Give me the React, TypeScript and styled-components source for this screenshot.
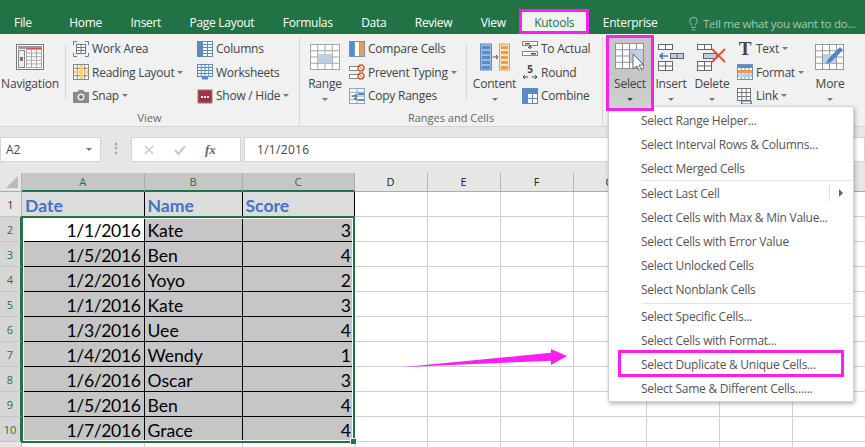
import React from 'react';
import styled, { createGlobalStyle } from 'styled-components';
import { Lightbulb } from 'lucide-react';

const Global = createGlobalStyle`
  html, body { margin: 0; padding: 0; background: #fff; }
  *, *::before, *::after { box-sizing: border-box; }
`;

const uiFont = `'Open Sans', 'Noto Sans', sans-serif`;

const Page = styled.div`
  position: relative;
  width: 865px;
  height: 447px;
  overflow: hidden;
  font-family: ${uiFont};
  background: #fff;
`;

/* title bar tabs */
const TabBar = styled.div`
  height: 34px;
  background: #217346;
  display: flex;
  align-items: flex-end;
  padding-left: 14px;
  gap: 28.5px;
`;

const Tab = styled.div<{ $active?: boolean; $wide?: boolean }>`
  position: relative;
  height: 24px;
  line-height: 26px;
  font-size: 12px;
  letter-spacing: -0.3px;
  color: ${({ $active }) => ($active ? '#217346' : '#fff')};
  margin-right: ${({ $wide }) => ($wide ? '9px' : '0')};
  white-space: nowrap;

  ${({ $active }) =>
    $active &&
    `
    &::before {
      content: '';
      position: absolute;
      inset: -1px -15px 0 -15px;
      background: #f1f1f1;
      border: 3px solid #f81ff0;
      z-index: 0;
    }
    & > span { position: relative; z-index: 1; }
  `}
`;

const TellMe = styled.div`
  display: flex;
  align-items: center;
  gap: 2px;
  height: 24px;
  padding-top: 2px;
  font-size: 11.6px;
  letter-spacing: -0.3px;
  color: #a3c9b3;
  white-space: nowrap;
`;

/* ribbon */
const Ribbon = styled.div`
  height: 93px;
  background: #f1f1f1;
  border-bottom: 1px solid #d4d4d4;
  display: flex;
`;

const Group = styled.div<{ $w: number; $edge?: boolean }>`
  width: ${({ $w }) => $w}px;
  flex: none;
  display: flex;
  flex-direction: column;
  height: 88px;
  margin-top: 3px;
  border-right: ${({ $edge }) => ($edge ? '1px solid #d6d6d6' : 'none')};
`;

const GroupBody = styled.div`
  flex: 1;
  display: flex;
  min-height: 0;
`;

const GroupLabel = styled.div`
  height: 15px;
  line-height: 16px;
  font-size: 11px;
  color: #666;
  text-align: center;
  white-space: nowrap;
`;

const LargeButton = styled.div<{ $w: number; $picked?: boolean }>`
  position: relative;
  z-index: 3;
  width: ${({ $w }) => $w}px;
  flex: none;
  height: 72px;
  display: flex;
  flex-direction: column;
  align-items: center;
  padding-top: 6px;
  font-size: 12px;
  letter-spacing: -0.2px;
  color: #444;
  ${({ $picked }) =>
    $picked &&
    `
    outline: 3px solid #f81ff0;
    outline-offset: -1px;
    background: linear-gradient(#c6c6c6 0 60%, #d2d2d2 100%);
  `}
`;

const LargeIcon = styled.div`
  height: 28px;
  display: flex;
  align-items: center;
  justify-content: center;
`;

const LargeText = styled.div`
  margin-top: 4px;
  line-height: 18px;
  white-space: nowrap;
`;

const Caret = styled.span<{ $dark?: boolean }>`
  display: inline-block;
  width: 0;
  height: 0;
  border-left: 3px solid transparent;
  border-right: 3px solid transparent;
  border-top: 3px solid ${({ $dark }) => ($dark ? '#444' : '#777')};
`;

const CaretRow = styled.div`
  height: 13px;
  display: flex;
  align-items: center;
  justify-content: center;
`;

const Divider = styled.div<{ $at: number }>`
  width: 1px;
  flex: none;
  height: 55px;
  margin: 7px ${({ $at }) => $at}px 0 0;
  background: #d6d6d6;
`;

const SmallColumn = styled.div<{ $w: number }>`
  width: ${({ $w }) => $w}px;
  flex: none;
`;

const SmallItem = styled.div`
  height: 23.5px;
  display: flex;
  align-items: center;
  gap: 3px;
  font-size: 12px;
  letter-spacing: -0.25px;
  color: #444;
  white-space: nowrap;
`;

const SmallIcon = styled.div`
  width: 16px;
  height: 16px;
  flex: none;
  display: flex;
  align-items: center;
  justify-content: center;
`;

const Spacer = styled.div<{ $w: number }>`
  width: ${({ $w }) => $w}px;
  flex: none;
`;

const SerifT = styled.span`
  font-family: 'Liberation Serif', serif;
  font-weight: 700;
  font-size: 19px;
  line-height: 16px;
  color: #444;
`;

const RoundMark = styled.span`
  font-size: 10px;
  font-weight: 700;
  line-height: 9px;
  color: #444;
  display: flex;
  flex-direction: column;
  align-items: center;
`;

/* name box and formula input */
const FormulaBar = styled.div`
  height: 46px;
  background: #e6e6e6;
  display: flex;
  padding-top: 10px;
  align-items: flex-start;
`;

const NameBox = styled.div`
  width: 101px;
  height: 25px;
  flex: none;
  background: #fff;
  border: 1px solid #d4d4d4;
  display: flex;
  align-items: center;
  justify-content: space-between;
  padding: 0 8px 0 5px;
  font-size: 12px;
  color: #444;
`;

const Grip = styled.div`
  width: 30px;
  flex: none;
  height: 25px;
  line-height: 21px;
  text-align: center;
  color: #999;
  font-size: 12px;
  font-weight: 700;
`;

const FxBox = styled.div`
  width: 110px;
  height: 25px;
  flex: none;
  background: #fff;
  border: 1px solid #d4d4d4;
  display: flex;
  align-items: center;
  padding: 0 0 0 11px;
  gap: 18px;
`;

const FxText = styled.span`
  font-family: 'Liberation Serif', serif;
  font-style: italic;
  font-weight: 700;
  font-size: 13px;
  color: #666;
`;

const FormulaInput = styled.div`
  flex: 1;
  height: 25px;
  margin-left: 3px;
  background: #fff;
  border: 1px solid #d4d4d4;
  padding-left: 12px;
  line-height: 23px;
  font-size: 12px;
  letter-spacing: 0.3px;
  color: #444;
`;

/* worksheet */
const Sheet = styled.div`
  position: relative;
  display: grid;
  grid-template-columns: 22px 122.5px 98px 112px repeat(7, 73px);
  grid-template-rows: 19px repeat(10, 25px) 30px;
  font-family: Lato, 'Liberation Sans', sans-serif;
`;

const Corner = styled.div`
  background: #e6e6e6;
  border-right: 1px solid #b5b5b5;
  border-bottom: 1px solid #ababab;
  position: relative;

  &::after {
    content: '';
    position: absolute;
    right: 3px;
    bottom: 3px;
    width: 12px;
    height: 12px;
    background: #b9b9b9;
    clip-path: polygon(100% 0, 100% 100%, 0 100%);
  }
`;

const ColHead = styled.div<{ $on?: boolean }>`
  background: ${({ $on }) => ($on ? '#c6c6c6' : '#e6e6e6')};
  border-right: 1px solid ${({ $on }) => ($on ? '#ababab' : '#b5b5b5')};
  border-bottom: ${({ $on }) => ($on ? '2px solid #217346' : '1px solid #ababab')};
  color: ${({ $on }) => ($on ? '#217346' : '#222')};
  font-family: ${uiFont};
  font-size: 11px;
  line-height: 18px;
  text-align: center;
`;

const RowHead = styled.div<{ $on?: boolean }>`
  background: ${({ $on }) => ($on ? '#d6d6d6' : '#e6e6e6')};
  border-right: ${({ $on }) => ($on ? '2px solid #217346' : '1px solid #b5b5b5')};
  border-bottom: 1px solid #c6c6c6;
  color: ${({ $on }) => ($on ? '#217346' : '#333')};
  font-family: ${uiFont};
  font-size: 11px;
  display: flex;
  align-items: center;
  justify-content: center;
`;

const Cell = styled.div<{ $kind: 'title' | 'data' | 'white' | 'empty'; $right?: boolean }>`
  background: ${({ $kind }) =>
    $kind === 'title' ? '#dcdcdc' : $kind === 'data' ? '#c6c6c6' : '#fff'};
  border-right: 1px solid ${({ $kind }) => ($kind === 'empty' ? '#d0d0d0' : '#000')};
  border-bottom: 1px solid ${({ $kind }) => ($kind === 'empty' ? '#d0d0d0' : '#000')};
  color: #000;
  font-size: 17.6px;
  line-height: 27px;
  padding: 0 3px;
  text-align: ${({ $right }) => ($right ? 'right' : 'left')};
  letter-spacing: ${({ $right }) => ($right ? '-0.4px' : '0')};
  white-space: nowrap;
  overflow: hidden;
`;

const TitleText = styled.span`
  color: #4472c4;
  font-weight: 700;
`;

const SelectionBox = styled.div`
  position: absolute;
  left: 21px;
  top: 43px;
  width: 334px;
  height: 227px;
  border: 2px solid #217346;
  box-shadow: inset 0 0 0 1px #fff;
  pointer-events: none;

  &::after {
    content: '';
    position: absolute;
    right: -4px;
    bottom: -4px;
    width: 7px;
    height: 7px;
    background: #217346;
    border: 1px solid #fff;
  }
`;

/* dropdown */
const Menu = styled.div`
  position: absolute;
  left: 608px;
  top: 106px;
  width: 246px;
  height: 296px;
  padding-top: 1px;
  background: #fff;
  border: 1px solid #d4d4d4;
  box-shadow: 1px 2px 4px rgba(0, 0, 0, 0.28);
  z-index: 2;
`;

const MenuItem = styled.div<{ $marked?: boolean }>`
  position: relative;
  height: 24px;
  line-height: 26px;
  padding-left: 32px;
  font-size: 12px;
  letter-spacing: -0.25px;
  color: #555;
  white-space: nowrap;

  ${({ $marked }) =>
    $marked &&
    `
    &::after {
      content: '';
      position: absolute;
      left: 9px;
      top: -2px;
      width: 226px;
      height: 27px;
      border: 3px solid #f81ff0;
    }
  `}
`;

const MenuRule = styled.div<{ $top?: number }>`
  height: 1px;
  margin: ${({ $top }) => $top ?? 0}px 1px 0 33px;
  background: #e1e1e6;
`;

const SubMark = styled.div`
  position: absolute;
  left: 220px;
  top: 4px;
  height: 16px;
  width: 20px;
  border-left: 1px solid #dcdcdc;

  &::after {
    content: '';
    position: absolute;
    left: 9px;
    top: 4px;
    border-top: 4px solid transparent;
    border-bottom: 4px solid transparent;
    border-left: 4px solid #666;
  }
`;

const PointerArrow = styled.svg`
  position: absolute;
  left: 400px;
  top: 345px;
  z-index: 2;
`;

/* ribbon drawings */
const line = '#8a8a8a';
const blue = '#5b8bc4';
const orange = '#ee9b4b';
const pale = '#bccfe4';

const Lattice = ({ x, y, w, h, cols, rows, stroke = line }: { x: number; y: number; w: number; h: number; cols: number; rows: number; stroke?: string }) => {
  const parts: React.ReactElement[] = [];
  for (let i = 1; i < cols; i++) {
    const px = x + (w * i) / cols;
    parts.push(<line key={`c${i}`} x1={px} y1={y} x2={px} y2={y + h} stroke={stroke} />);
  }
  for (let i = 1; i < rows; i++) {
    const py = y + (h * i) / rows;
    parts.push(<line key={`r${i}`} x1={x} y1={py} x2={x + w} y2={py} stroke={stroke} />);
  }
  return (
    <g>
      <rect x={x} y={y} width={w} height={h} fill="#fff" stroke={stroke} />
      {parts}
    </g>
  );
};

const NavigationIcon = () => (
  <svg width="30" height="28" viewBox="0 0 30 28">
    <rect x="1.5" y="1.5" width="27" height="25" fill="#fff" stroke="#777" />
    <rect x="3" y="3" width="24" height="3" fill="#999" />
    <line x1="12" y1="5.5" x2="27" y2="5.5" stroke="#d9534a" />
    <Lattice x={11.5} y={6.5} w={15} h={18} cols={3} rows={5} stroke="#aaa" />
    <rect x="3.5" y="7.5" width="6" height="17" fill="#eee" stroke="#888" />
    <rect x="5" y="14" width="3" height="4" fill="#777" />
  </svg>
);

const RangeIcon = () => (
  <svg width="30" height="28" viewBox="0 0 30 28">
    <Lattice x={0.5} y={1.5} w={29} h={25} cols={4} rows={4} stroke="#a5a5a5" />
    <rect x="8" y="11" width="14" height="9" fill={pale} />
  </svg>
);

const ContentIcon = () => (
  <svg width="30" height="28" viewBox="0 0 30 28">
    <rect x="0.5" y="1" width="11" height="26" fill="#9dbbdd" stroke={blue} />
    <rect x="19.5" y="1" width="10" height="26" fill="#fbe3c8" stroke={orange} />
    {[5, 10, 15, 20, 25].map(y => (
      <g key={y}>
        <rect x="2" y={y - 2} width="8" height="3" fill={blue} />
        <rect x="21" y={y - 2} width="7" height="3" fill={orange} />
      </g>
    ))}
    <path d="M12.5 14h5M16 12l2 2-2 2" stroke="#555" fill="none" />
  </svg>
);

const SelectIcon = () => (
  <svg width="30" height="28" viewBox="0 0 30 28">
    <Lattice x={0.5} y={0.5} w={28} h={25} cols={4} rows={4} stroke="#8f8f8f" />
    <rect x="15" y="7" width="13" height="12" fill={pale} />
    <path d="M18 11v15l4-3 3 6 2-1-3-6h5z" fill="#fff" stroke="#666" />
  </svg>
);

const InsertIcon = () => (
  <svg width="28" height="28" viewBox="0 0 28 28">
    <rect x="1.5" y="1.5" width="14" height="5" fill="#fff" stroke="#666" />
    <line x1="8.5" y1="1.5" x2="8.5" y2="6.5" stroke="#666" />
    <rect x="13.5" y="10.5" width="13" height="5" fill={pale} stroke="#666" />
    <line x1="20" y1="10.5" x2="20" y2="15.5" stroke="#666" />
    <path d="M11 13H3M6 10l-3 3 3 3" stroke="#3e7cbf" strokeWidth="1.6" fill="none" />
    <Lattice x={1.5} y={18.5} w={14} h={9} cols={2} rows={2} stroke="#666" />
  </svg>
);

const DeleteIcon = () => (
  <svg width="30" height="28" viewBox="0 0 30 28">
    <rect x="0.5" y="1.5" width="14" height="5" fill="#fff" stroke="#666" />
    <line x1="7.5" y1="1.5" x2="7.5" y2="6.5" stroke="#666" />
    <rect x="6.5" y="10.5" width="13" height="5" fill={pale} stroke="#666" />
    <Lattice x={0.5} y={18.5} w={14} h={9} cols={2} rows={2} stroke="#666" />
    <path d="M15 6l13 13M28 6L15 19" stroke="#d9583b" strokeWidth="2" />
  </svg>
);

const MoreIcon = () => (
  <svg width="30" height="28" viewBox="0 0 30 28">
    <Lattice x={0.5} y={1.5} w={28} h={25} cols={4} rows={4} stroke="#999" />
    <rect x="8" y="11" width="13" height="9" fill={pale} />
    <path d="M11 21l2-5 12-12 3 3-12 12z" fill="#4f87c4" />
  </svg>
);

const icon = (body: React.ReactNode) => (
  <svg width="16" height="16" viewBox="0 0 16 16">
    {body}
  </svg>
);

const WorkAreaIcon = () =>
  icon(
    <>
      <path d="M.5 4V.5H4M12 .5h3.5V4M15.5 12v3.5H12M4 15.5H.5V12" stroke="#4a84c2" fill="none" />
      <Lattice x={3.5} y={3.5} w={9} h={9} cols={2} rows={3} stroke="#777" />
    </>
  );

const ReadingIcon = () =>
  icon(
    <>
      <Lattice x={0.5} y={0.5} w={15} h={15} cols={4} rows={4} stroke="#888" />
      <rect x="6.5" y="1" width="3" height="14" fill="#f7cf6b" />
      <rect x="1" y="6.5" width="14" height="3" fill="#f7cf6b" />
    </>
  );

const SnapIcon = () =>
  icon(
    <>
      <path d="M0 4h4l2-2h4l2 2h4v11H0z" fill="#8a8a8a" />
      <circle cx="8" cy="9" r="3.5" fill="#eee" />
      <circle cx="8" cy="9" r="2" fill="#777" />
    </>
  );

const ColumnsIcon = () =>
  icon(
    <>
      <Lattice x={0.5} y={0.5} w={15} h={15} cols={3} rows={5} stroke="#5a8cc2" />
      <rect x="1" y="1" width="4" height="14" fill={blue} />
    </>
  );

const WorksheetsIcon = () =>
  icon(
    <>
      <Lattice x={0.5} y={0.5} w={15} h={12} cols={4} rows={4} stroke="#5a8cc2" />
      <rect x="5" y="12.5" width="6" height="3" fill={blue} />
    </>
  );

const ShowHideIcon = () =>
  icon(
    <>
      <rect x="1" y="2" width="14" height="13" fill="#a82f42" stroke="#86808a" />
      <rect x="4" y="8" width="2" height="2" fill="#fff" />
      <rect x="7" y="8" width="2" height="2" fill="#fff" />
      <rect x="10" y="8" width="2" height="2" fill="#fff" />
    </>
  );

const CompareIcon = () =>
  icon(
    <>
      <Lattice x={0.5} y={0.5} w={15} h={15} cols={3} rows={1} stroke="#6f94bd" />
      <rect x="1" y="1" width="4" height="14" fill={blue} />
      <rect x="10.5" y="1" width="4.5" height="14" fill={orange} />
    </>
  );

const PreventIcon = () =>
  icon(
    <>
      <rect x="0.5" y="2.5" width="11" height="4" fill="#fff" stroke="#888" />
      <rect x="0.5" y="10.5" width="11" height="4" fill="#fff" stroke="#888" />
      <circle cx="12" cy="4" r="3" fill="#fff" stroke="#d9583b" strokeWidth="1.4" />
      <circle cx="12" cy="12" r="3" fill="#fff" stroke="#d9583b" strokeWidth="1.4" />
      <path d="M10 2l4 4M10 10l4 4" stroke="#d9583b" />
    </>
  );

const CopyRangesIcon = () =>
  icon(
    <>
      <Lattice x={0.5} y={0.5} w={15} h={15} cols={2} rows={4} stroke="#8aa6c6" />
      <rect x="9" y="5" width="6" height="2" fill={blue} />
      <rect x="9" y="11" width="6" height="2" fill={blue} />
      <path d="M3 8h4M7 6v6M5 10l2 2" stroke="#444" fill="none" />
    </>
  );

const ToActualIcon = () =>
  icon(
    <>
      <rect x="0.5" y="0.5" width="15" height="4" fill="#fff" stroke="#888" />
      <rect x="3" y="2" width="5" height="1.5" fill="#c8363a" />
      <path d="M8 8V6M6 7l2-2 2 2" stroke="#444" fill="none" />
      <rect x="0.5" y="10.5" width="15" height="4" fill="#fff" stroke="#888" />
      <rect x="9" y="12" width="5" height="1.5" fill="#2d55a5" />
    </>
  );

const RoundIcon = () => (
  <RoundMark>
    5
    <svg width="16" height="6" viewBox="0 0 16 6">
      <path d="M1 3h5M3 1L1 3l2 2M10 3h5M13 1l2 2-2 2" stroke="#444" fill="none" />
    </svg>
  </RoundMark>
);

const CombineIcon = () =>
  icon(
    <>
      <Lattice x={0.5} y={0.5} w={15} h={15} cols={3} rows={3} stroke="#5a8cc2" />
      <rect x="1" y="1" width="14" height="4" fill={blue} />
      <rect x="1" y="1" width="4" height="14" fill={blue} />
    </>
  );

const FormatIcon = () =>
  icon(
    <>
      <Lattice x={0.5} y={0.5} w={15} h={15} cols={4} rows={1} stroke="#6f94bd" />
      <rect x="1" y="1" width="14" height="3" fill={blue} />
      <rect x="1" y="6" width="14" height="3" fill={orange} />
      <rect x="1" y="10" width="14" height="3" fill={pale} />
    </>
  );

const LinkIcon = () =>
  icon(
    <>
      <Lattice x={0.5} y={0.5} w={13} h={12} cols={3} rows={3} stroke="#777" />
      <path d="M6 13h7a1.5 1.5 0 010 3H6a1.5 1.5 0 010-3z" fill="#fff" stroke="#2f6cb0" strokeWidth="1.2" />
    </>
  );

const CrossIcon = () => (
  <svg width="12" height="12" viewBox="0 0 12 12">
    <path d="M2 2l8 8M10 2l-8 8" stroke="#c8c8c8" strokeWidth="1.5" />
  </svg>
);

const CheckIcon = () => (
  <svg width="14" height="12" viewBox="0 0 14 12">
    <path d="M2 6l3.5 4L12 2" stroke="#c8c8c8" strokeWidth="2" fill="none" />
  </svg>
);

const tabs = ['Home', 'Insert', 'Page Layout', 'Formulas', 'Data', 'Review', 'View'];

const rows: [string, string, number][] = [
  ['1/1/2016', 'Kate', 3],
  ['1/5/2016', 'Ben', 4],
  ['1/2/2016', 'Yoyo', 2],
  ['1/1/2016', 'Kate', 3],
  ['1/3/2016', 'Uee', 4],
  ['1/4/2016', 'Wendy', 1],
  ['1/6/2016', 'Oscar', 3],
  ['1/5/2016', 'Ben', 4],
  ['1/7/2016', 'Grace', 4],
];

// the last three column letters sit behind the open menu
const emptyCols = ['D', 'E', 'F', 'G', '', '', ''];

const EmptyCells = () => (
  <>
    {emptyCols.map((c, i) => (
      <Cell key={i} $kind="empty" />
    ))}
  </>
);

const Small = ({ art, text, caret }: { art: React.ReactNode; text: string; caret?: boolean }) => (
  <SmallItem>
    <SmallIcon>{art}</SmallIcon>
    {text}
    {caret && <Caret />}
  </SmallItem>
);

const Large = ({ w, art, text, caret, picked }: { w: number; art: React.ReactNode; text: string; caret?: boolean; picked?: boolean }) => (
  <LargeButton $w={w} $picked={picked}>
    <LargeIcon>{art}</LargeIcon>
    <LargeText>{text}</LargeText>
    {caret && (
      <CaretRow>
        <Caret $dark={picked} />
      </CaretRow>
    )}
  </LargeButton>
);

export default function App() {
  return (
    <Page>
      <Global />
      <TabBar>
        <Tab $wide>File</Tab>
        {tabs.map(t => (
          <Tab key={t}>{t}</Tab>
        ))}
        <Tab $active>
          <span>Kutools</span>
        </Tab>
        <Tab>Enterprise</Tab>
        <TellMe>
          <Lightbulb size={15} strokeWidth={1.4} />
          Tell me what you want to do...
        </TellMe>
      </TabBar>

      <Ribbon>
        <Group $w={300} $edge>
          <GroupBody>
            <Large w={60} art={<NavigationIcon />} text="Navigation" />
            <Spacer $w={5} />
            <Divider $at={7} />
            <SmallColumn $w={124}>
              <Small art={<WorkAreaIcon />} text="Work Area" />
              <Small art={<ReadingIcon />} text="Reading Layout" caret />
              <Small art={<SnapIcon />} text="Snap" caret />
            </SmallColumn>
            <SmallColumn $w={100}>
              <Small art={<ColumnsIcon />} text="Columns" />
              <Small art={<WorksheetsIcon />} text="Worksheets" />
              <Small art={<ShowHideIcon />} text="Show / Hide" caret />
            </SmallColumn>
          </GroupBody>
          <GroupLabel>View</GroupLabel>
        </Group>

        <Group $w={303} $edge>
          <GroupBody>
            <Spacer $w={5} />
            <Large w={40} art={<RangeIcon />} text="Range" caret />
            <Spacer $w={4} />
            <SmallColumn $w={117}>
              <Small art={<CompareIcon />} text="Compare Cells" />
              <Small art={<PreventIcon />} text="Prevent Typing" caret />
              <Small art={<CopyRangesIcon />} text="Copy Ranges" />
            </SmallColumn>
            <Divider $at={0} />
            <Large w={55} art={<ContentIcon />} text="Content" caret />
            <SmallColumn $w={80}>
              <Small art={<ToActualIcon />} text="To Actual" />
              <Small art={<RoundIcon />} text="Round" />
              <Small art={<CombineIcon />} text="Combine" />
            </SmallColumn>
          </GroupBody>
          <GroupLabel>Ranges and Cells</GroupLabel>
        </Group>

        <Group $w={262}>
          <GroupBody>
            <Spacer $w={5} />
            <Large w={44} art={<SelectIcon />} text="Select" caret picked />
            <Large w={38} art={<InsertIcon />} text="Insert" caret />
            <Large w={44} art={<DeleteIcon />} text="Delete" caret />
            <Spacer $w={3} />
            <SmallColumn $w={76}>
              <Small art={<SerifT>T</SerifT>} text="Text" caret />
              <Small art={<FormatIcon />} text="Format" caret />
              <Small art={<LinkIcon />} text="Link" caret />
            </SmallColumn>
            <Large w={34} art={<MoreIcon />} text="More" caret />
          </GroupBody>
        </Group>
      </Ribbon>

      <FormulaBar>
        <NameBox>
          A2
          <Caret />
        </NameBox>
        <Grip>⋮</Grip>
        <FxBox>
          <CrossIcon />
          <CheckIcon />
          <FxText>fx</FxText>
        </FxBox>
        <FormulaInput>1/1/2016</FormulaInput>
      </FormulaBar>

      <Sheet>
        <Corner />
        <ColHead $on>A</ColHead>
        <ColHead $on>B</ColHead>
        <ColHead $on>C</ColHead>
        {emptyCols.map((c, i) => (
          <ColHead key={i}>{c}</ColHead>
        ))}

        <RowHead>1</RowHead>
        <Cell $kind="title">
          <TitleText>Date</TitleText>
        </Cell>
        <Cell $kind="title">
          <TitleText>Name</TitleText>
        </Cell>
        <Cell $kind="title">
          <TitleText>Score</TitleText>
        </Cell>
        <EmptyCells />

        {rows.map(([date, name, score], i) => (
          <React.Fragment key={i}>
            <RowHead $on>{i + 2}</RowHead>
            <Cell $kind={i === 0 ? 'white' : 'data'} $right>
              {date}
            </Cell>
            <Cell $kind="data">{name}</Cell>
            <Cell $kind="data" $right>
              {score}
            </Cell>
            <EmptyCells />
          </React.Fragment>
        ))}

        <RowHead />
        <Cell $kind="empty" />
        <Cell $kind="empty" />
        <Cell $kind="empty" />
        <EmptyCells />

        <SelectionBox />
      </Sheet>

      <Menu>
        <MenuItem>Select Range Helper...</MenuItem>
        <MenuItem>Select Interval Rows &amp; Columns...</MenuItem>
        <MenuItem>Select Merged Cells</MenuItem>
        <MenuRule />
        <MenuItem>
          Select Last Cell
          <SubMark />
        </MenuItem>
        <MenuItem>Select Cells with Max &amp; Min Value...</MenuItem>
        <MenuItem>Select Cells with Error Value</MenuItem>
        <MenuItem>Select Unlocked Cells</MenuItem>
        <MenuItem>Select Nonblank Cells</MenuItem>
        <MenuRule $top={2} />
        <MenuItem>Select Specific Cells...</MenuItem>
        <MenuItem>Select Cells with Format...</MenuItem>
        <MenuItem $marked>Select Duplicate &amp; Unique Cells...</MenuItem>
        <MenuItem>Select Same &amp; Different Cells......</MenuItem>
      </Menu>

      <PointerArrow width="170" height="25" viewBox="400 345 170 25">
        <polygon points="404,367 551,352.7 551,349 567,356 551,365 551,360.7" fill="#f81ff0" />
      </PointerArrow>
    </Page>
  );
}
